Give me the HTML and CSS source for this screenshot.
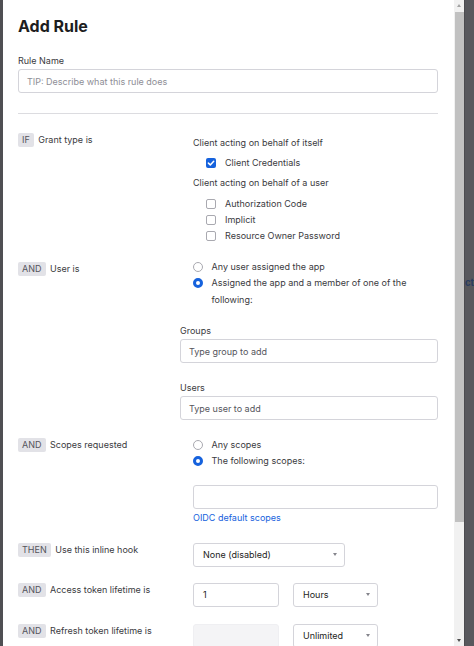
FILE: index.html
```html
<!DOCTYPE html>
<html lang="en">
<head>
<meta charset="utf-8">
<title>Add Rule</title>
<link rel="stylesheet" href="styles.css">
</head>
<body>
<div class="frame">
  <div class="edge-left"></div>
  <div class="modal">
    <h1 class="title">Add Rule</h1>
    <div class="field-label">Rule Name</div>
    <div class="text-input placeholder">TIP: Describe what this rule does</div>
    <div class="divider"></div>

    <div class="rule-row row-if">
      <div class="cond"><span class="badge">IF</span><span class="cond-label">Grant type is</span></div>
      <div class="opts">
        <div class="group-title">Client acting on behalf of itself</div>
        <div class="check-item"><span class="checkbox checked"><svg viewBox="0 0 10 10" width="10" height="10"><path d="M2.4 5.1 L4.3 6.9 L7.7 3.2" fill="none" stroke="#fff" stroke-width="1.5" stroke-linecap="round" stroke-linejoin="round"/></svg></span>Client Credentials</div>
        <div class="group-title second">Client acting on behalf of a user</div>
        <div class="check-item"><span class="checkbox"></span>Authorization Code</div>
        <div class="check-item"><span class="checkbox"></span>Implicit</div>
        <div class="check-item"><span class="checkbox"></span>Resource Owner Password</div>
      </div>
    </div>

    <div class="rule-row row-user">
      <div class="cond"><span class="badge">AND</span><span class="cond-label">User is</span></div>
      <div class="opts">
        <div class="radio-item"><span class="radio"></span><span>Any user assigned the app</span></div>
        <div class="radio-item"><span class="radio checked"></span><span>Assigned the app and a member of one of the<br>following:</span></div>
        <div class="sub-fields">
          <div class="sub-label">Groups</div>
          <div class="text-input dim">Type group to add</div>
          <div class="sub-label second">Users</div>
          <div class="text-input dim">Type user to add</div>
        </div>
      </div>
    </div>

    <div class="rule-row row-scopes">
      <div class="cond"><span class="badge">AND</span><span class="cond-label">Scopes requested</span></div>
      <div class="opts">
        <div class="radio-item"><span class="radio"></span><span>Any scopes</span></div>
        <div class="radio-item"><span class="radio checked"></span><span>The following scopes:</span></div>
        <div class="text-input scopes-input"></div>
        <div class="link">OIDC default scopes</div>
      </div>
    </div>

    <div class="rule-row row-hook">
      <div class="cond"><span class="badge">THEN</span><span class="cond-label">Use this inline hook</span></div>
      <div class="opts">
        <div class="select hook-select"><span>None (disabled)</span><span class="caret"></span></div>
      </div>
    </div>

    <div class="rule-row row-access">
      <div class="cond"><span class="badge">AND</span><span class="cond-label">Access token lifetime is</span></div>
      <div class="opts inline">
        <div class="text-input num-input">1</div>
        <div class="select unit-select"><span>Hours</span><span class="caret"></span></div>
      </div>
    </div>

    <div class="rule-row row-refresh">
      <div class="cond"><span class="badge">AND</span><span class="cond-label">Refresh token lifetime is</span></div>
      <div class="opts inline">
        <div class="text-input num-input disabled"></div>
        <div class="select unit-select"><span>Unlimited</span><span class="caret"></span></div>
      </div>
    </div>
  </div>
  <div class="scrollbar">
    <span class="sb-arrow up"></span>
    <div class="sb-thumb"></div>
    <div class="sb-rest"></div>
    <span class="sb-arrow down"></span>
  </div>
  <div class="backdrop">
    <div class="bd-text">ct</div>
  </div>
</div>
</body>
</html>
```

FILE: styles.css
```css
* {
  box-sizing: border-box;
  margin: 0;
  padding: 0;
}

body {
  margin: 0;
  font-family: Inter, "Noto Sans", "Liberation Sans", sans-serif;
  font-size: 9px;
  color: #1d1d21;
  background: #58585d;
}

.frame {
  display: flex;
  width: 474px;
  height: 646px;
  overflow: hidden;
  background: #58585d;
}

.edge-left {
  width: 3px;
  background: #4f4f53;
}

.modal {
  width: 451px;
  flex: none;
  background: #fff;
  padding: 16px 16px 0 15px;
  overflow: hidden;
}

.title {
  font-size: 16px;
  font-weight: 700;
  line-height: 20px;
  color: #1d1d21;
}

.field-label {
  margin-top: 18px;
  line-height: 14px;
  color: #3a3a40;
}

.text-input {
  display: flex;
  align-items: center;
  height: 24px;
  border: 1px solid #d4d4da;
  border-radius: 3px;
  padding-left: 8px;
  margin-top: 1px;
  color: #1d1d21;
}

.placeholder {
  color: #8e8e96;
}

.dim {
  color: #55555c;
}

.divider {
  margin-top: 20px;
  border-top: 1px solid #dcdce0;
}

.rule-row {
  display: grid;
  grid-template-columns: 175px 1fr;
}

.cond {
  display: flex;
  align-items: center;
  gap: 4.5px;
  align-self: start;
}

.badge {
  display: inline-block;
  height: 14px;
  line-height: 14px;
  padding: 0 4px;
  background: #e2e2e7;
  border-radius: 2px;
  color: #55555c;
}

.cond-label {
  color: #3a3a40;
  line-height: 14px;
}

.opts {
  color: #3a3a40;
}

.group-title {
  line-height: 16px;
  margin-bottom: 4px;
}

.group-title.second {
  margin-top: 4px;
  margin-bottom: 5px;
}

.check-item {
  display: flex;
  align-items: center;
  line-height: 16px;
  padding-left: 13px;
}

.checkbox {
  width: 10px;
  height: 10px;
  border: 1px solid #a9a9b0;
  border-radius: 2px;
  margin-right: 9px;
  flex: none;
  display: flex;
}

.checkbox.checked {
  border: none;
  background: #1662dd;
}

.radio-item {
  display: flex;
  align-items: flex-start;
  line-height: 16px;
}

.radio-item + .radio-item span:last-child {
  line-height: 16.5px;
}

.radio {
  width: 10px;
  height: 10px;
  border: 1px solid #a9a9b0;
  border-radius: 50%;
  margin-top: 3px;
  margin-right: 8.5px;
  flex: none;
  background: #fff;
}

.radio.checked {
  border: 3px solid #1662dd;
}

/* row spacing */
.row-if {
  margin-top: 19px;
}
.row-if .opts {
  padding-top: 2px;
}

.row-user {
  margin-top: 15px;
}
.row-user .cond {
  margin-top: 3px;
}

.sub-fields {
  margin-left: -13px;
  margin-top: 16px;
}

.sub-label {
  line-height: 14px;
  color: #3a3a40;
}

.sub-label.second {
  margin-top: 18px;
}

.row-scopes {
  margin-top: 17px;
}
.row-scopes .cond {
  margin-top: 1px;
}

.scopes-input {
  margin-top: 15px;
}

.link {
  margin-top: 2px;
  line-height: 14px;
  color: #1662dd;
}

.row-hook {
  margin-top: 18px;
}

.select {
  display: flex;
  align-items: center;
  justify-content: space-between;
  height: 24px;
  border: 1px solid #d4d4da;
  border-radius: 3px;
  padding: 0 7px 0 9px;
  color: #1d1d21;
}

.caret {
  width: 0;
  height: 0;
  border-left: 2.5px solid transparent;
  border-right: 2.5px solid transparent;
  border-top: 3px solid #85858c;
}

.hook-select {
  width: 152px;
}

.row-access {
  margin-top: 16px;
}

.row-refresh {
  margin-top: 17px;
}

.inline {
  display: flex;
  gap: 14px;
}

.num-input {
  width: 86px;
  margin-top: 0;
  padding-left: 9px;
}

.num-input.disabled {
  background: #f4f4f6;
  border-color: #efeff2;
}

.unit-select {
  width: 85px;
}

/* scrollbar */
.scrollbar {
  width: 10px;
  flex: none;
  background: #f1f1f1;
  display: flex;
  flex-direction: column;
  align-items: center;
}

.sb-arrow {
  flex: none;
  width: 0;
  height: 0;
  border-left: 2.5px solid transparent;
  border-right: 2.5px solid transparent;
}

.sb-arrow.up {
  margin: 4px 0 5px;
  border-bottom: 3px solid #a3a3a3;
}

.sb-arrow.down {
  margin: 0 0 4px;
  border-top: 3px solid #505050;
}

.sb-thumb {
  width: 9px;
  height: 510px;
  background: #c1c1c1;
  flex: none;
}

.sb-rest {
  flex: 1;
}

.backdrop {
  flex: 1;
  background: #58585d;
  border-left: 1px solid #4c4c50;
  overflow: hidden;
}

.bd-text {
  margin-top: 276px;
  margin-left: 0;
  font-weight: 700;
  font-size: 9.5px;
  color: #2a3c60;
  line-height: 14px;
}
```
